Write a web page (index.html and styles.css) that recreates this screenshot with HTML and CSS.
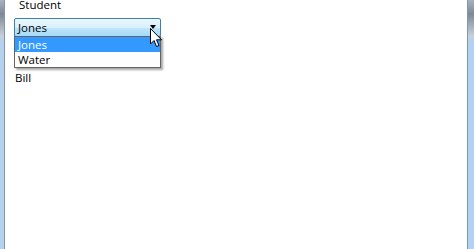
FILE: index.html
```html
<!DOCTYPE html>
<html>
<head>
<meta charset="utf-8">
<link rel="stylesheet" href="styles.css">
</head>
<body>
<div class="window">
  <div class="frame-left"></div>
  <div class="client">
    <div class="label">Student</div>
    <div class="combo-wrap">
      <div class="combo">
        <span class="combo-text">Jones</span>
        <span class="arrow"></span>
      </div>
      <div class="dropdown">
        <div class="item selected">Jones</div>
        <div class="item">Water</div>
      </div>
      <svg class="cursor" width="13" height="20" viewBox="0 0 13 20">
        <path d="M0.5 0.5 L0.5 16 L4 12.5 L6.5 18.5 L9 17.5 L6.5 11.8 L11.5 11.8 Z" fill="#fff" stroke="#000" stroke-width="1" stroke-linejoin="miter"/>
      </svg>
    </div>
    <div class="name">Bill</div>
  </div>
  <div class="frame-right"></div>
</div>
</body>
</html>
```
FILE: styles.css
```css
html, body {
  margin: 0;
  padding: 0;
  width: 474px;
  height: 249px;
  overflow: hidden;
  background: #fff;
}
.window {
  display: flex;
  width: 474px;
  height: 249px;
  font-family: "Open Sans", "Noto Sans", sans-serif;
  font-size: 11.5px;
  color: #000;
}
.frame-left {
  width: 4px;
  border-right: 1px solid #8595a8;
  background: linear-gradient(to bottom, #a9b3bf 0px, #7f8996 14px, #a6afba 26px, #c6d0dc 36px, #b4d1f0 42px, #b4d1f0 100%);
}
.frame-right {
  width: 6px;
  border-left: 1px solid #8595a8;
  background: linear-gradient(to bottom, #a9b3bf 0px, #7f8996 14px, #a6afba 26px, #c6d0dc 36px, #b4d1f0 42px, #b4d1f0 100%);
}
.client {
  flex: 1;
  background: #fff;
  padding-left: 9px;
}
.label {
  margin-top: -3px;
  margin-left: 5px;
  line-height: 15px;
  height: 15px;
  margin-bottom: 6px;
}
.combo-wrap {
  position: relative;
  width: 147px;
}
.combo {
  height: 17px;
  border: 1px solid #3c7fb1;
  border-radius: 2px;
  background: linear-gradient(to bottom, #eaf6fd 0%, #d9f0fc 50%, #bee6fd 51%, #a7d9f5 100%);
  display: flex;
  align-items: center;
  justify-content: space-between;
  padding: 0 4px 0 3px;
}
.combo-text {
  line-height: 17px;
}
.arrow {
  width: 0;
  height: 0;
  border-left: 3.5px solid transparent;
  border-right: 3.5px solid transparent;
  border-top: 4px solid #000;
  margin-top: -1px;
}
.dropdown {
  position: absolute;
  left: 0;
  top: 18px;
  width: 145px;
  border: 1px solid #646464;
  background: #fff;
  box-shadow: 2px 2px 2px rgba(0, 0, 0, 0.35);
}
.item {
  height: 15px;
  line-height: 15px;
  padding-left: 3px;
}
.item.selected {
  background: #3399ff;
  color: #fff;
}
.cursor {
  position: absolute;
  left: 136px;
  top: 10px;
}
.name {
  margin-top: 33px;
  margin-left: 1px;
  line-height: 15px;
}
```
